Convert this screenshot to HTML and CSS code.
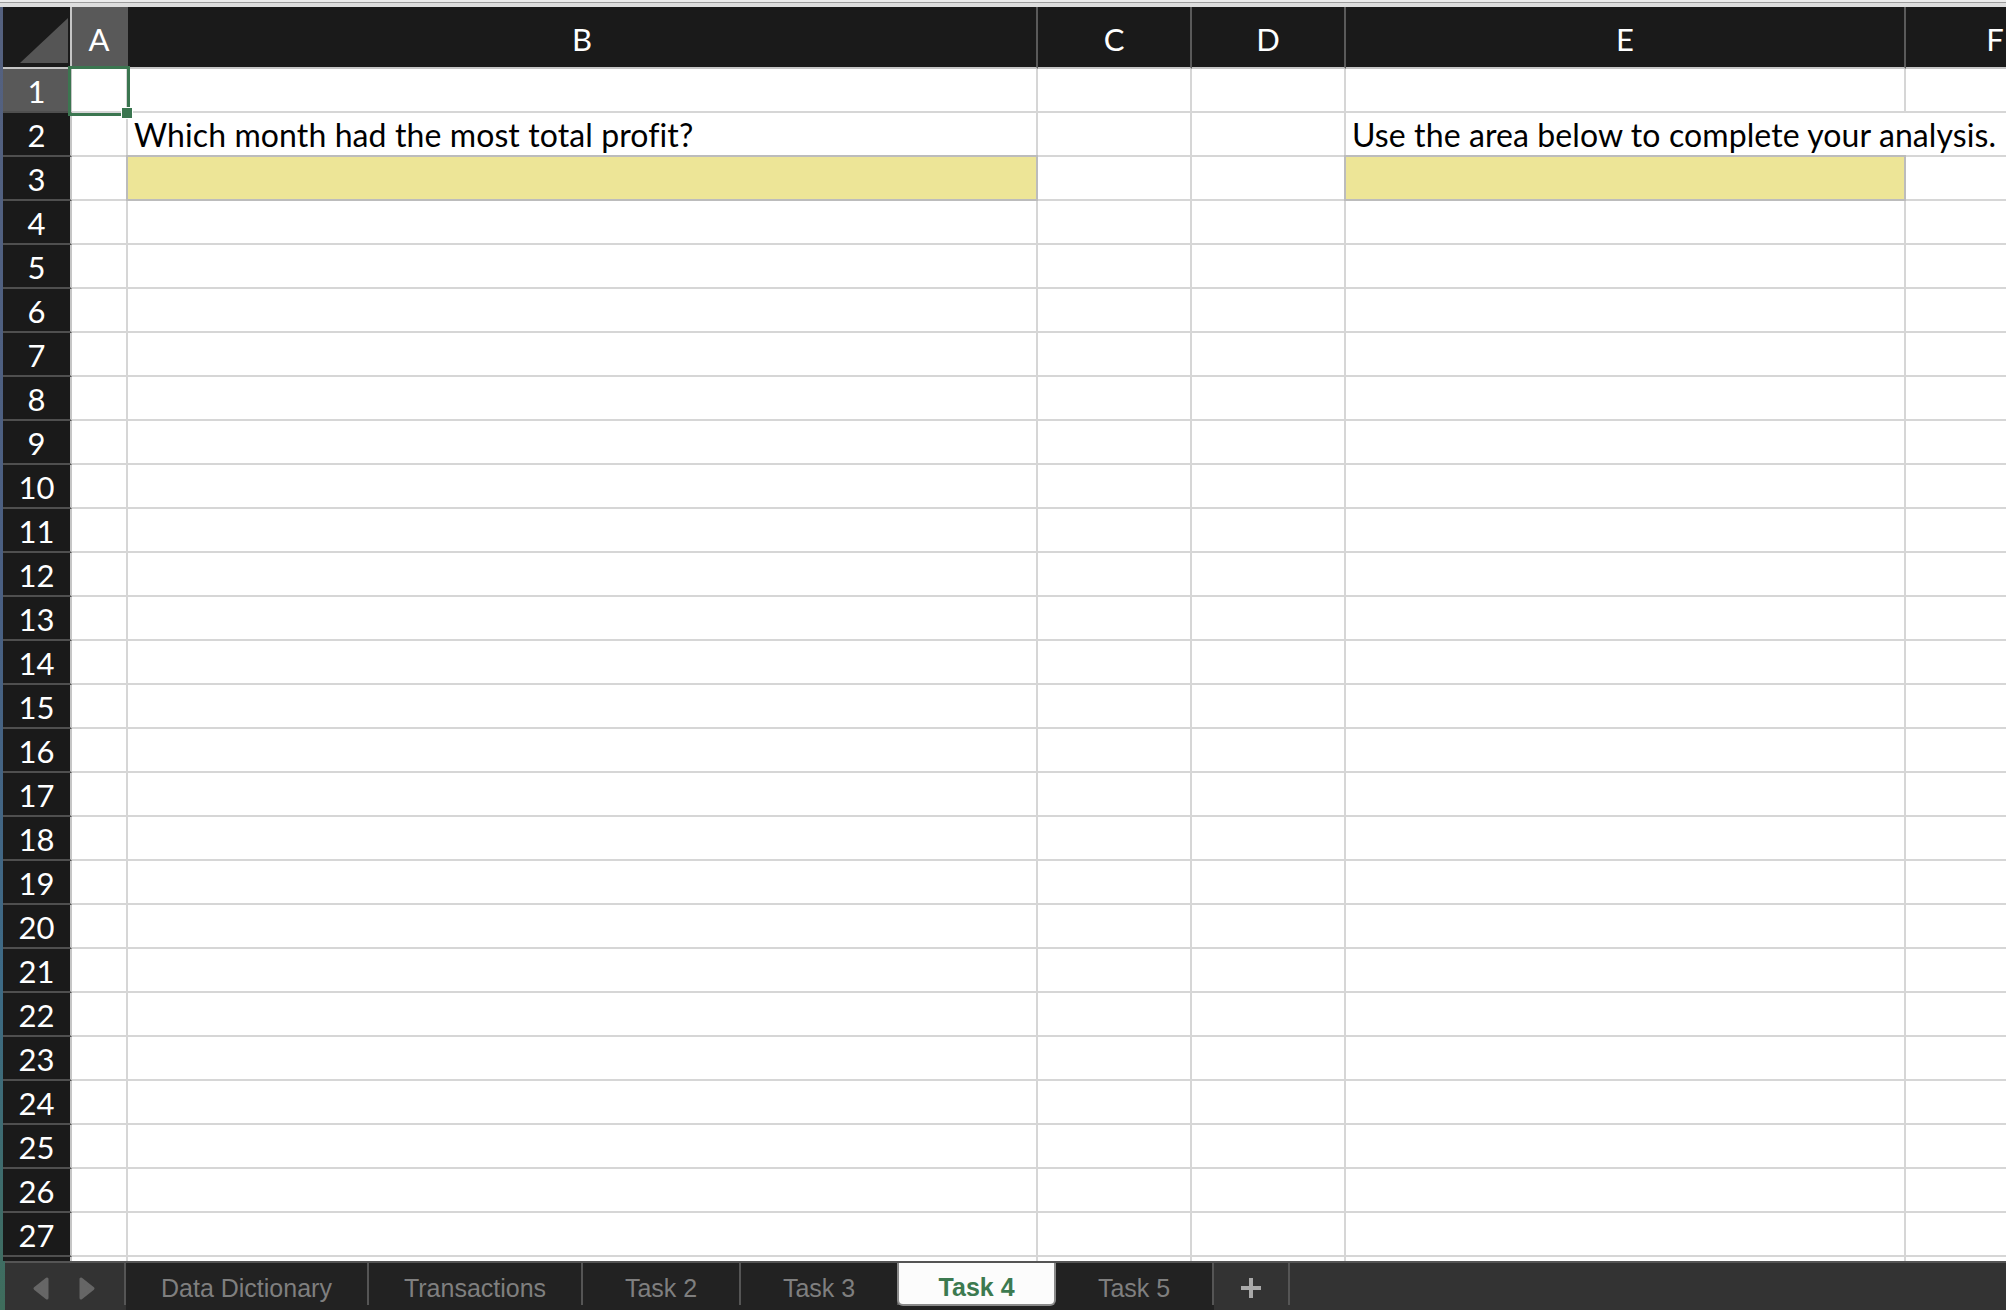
FILE: index.html
```html
<!DOCTYPE html>
<html lang="en">
<head>
<meta charset="utf-8">
<title>Task 4</title>
<link rel="stylesheet" href="styles.css">
</head>
<body>
<div class="window">
  <div class="topbar"></div>
  <div class="sheet">
    <div class="row head">
      <div class="corner"><svg class="corner-tri" width="48" height="45" viewBox="0 0 48 45"><polygon points="0,45 48,0 48,45" fill="#555"/></svg></div>
      <div class="ch sel">A</div>
      <div class="ch">B</div>
      <div class="ch">C</div>
      <div class="ch">D</div>
      <div class="ch">E</div>
      <div class="ch">F</div>
    </div>
    <div class="row"><div class="rh sel">1</div><div class="c active"><div class="selbox"></div><div class="handle"></div></div><div class="c"></div><div class="c"></div><div class="c"></div><div class="c"></div><div class="c"></div></div>
    <div class="row"><div class="rh">2</div><div class="c"></div><div class="c txt">Which month had the most total profit?</div><div class="c"></div><div class="c"></div><div class="c txt spill">Use the area below to complete your analysis.</div><div class="c"></div></div>
    <div class="row"><div class="rh">3</div><div class="c"></div><div class="c fill"></div><div class="c"></div><div class="c"></div><div class="c fill"></div><div class="c"></div></div>
    <div class="row"><div class="rh">4</div><div class="c"></div><div class="c"></div><div class="c"></div><div class="c"></div><div class="c"></div><div class="c"></div></div>
    <div class="row"><div class="rh">5</div><div class="c"></div><div class="c"></div><div class="c"></div><div class="c"></div><div class="c"></div><div class="c"></div></div>
    <div class="row"><div class="rh">6</div><div class="c"></div><div class="c"></div><div class="c"></div><div class="c"></div><div class="c"></div><div class="c"></div></div>
    <div class="row"><div class="rh">7</div><div class="c"></div><div class="c"></div><div class="c"></div><div class="c"></div><div class="c"></div><div class="c"></div></div>
    <div class="row"><div class="rh">8</div><div class="c"></div><div class="c"></div><div class="c"></div><div class="c"></div><div class="c"></div><div class="c"></div></div>
    <div class="row"><div class="rh">9</div><div class="c"></div><div class="c"></div><div class="c"></div><div class="c"></div><div class="c"></div><div class="c"></div></div>
    <div class="row"><div class="rh">10</div><div class="c"></div><div class="c"></div><div class="c"></div><div class="c"></div><div class="c"></div><div class="c"></div></div>
    <div class="row"><div class="rh">11</div><div class="c"></div><div class="c"></div><div class="c"></div><div class="c"></div><div class="c"></div><div class="c"></div></div>
    <div class="row"><div class="rh">12</div><div class="c"></div><div class="c"></div><div class="c"></div><div class="c"></div><div class="c"></div><div class="c"></div></div>
    <div class="row"><div class="rh">13</div><div class="c"></div><div class="c"></div><div class="c"></div><div class="c"></div><div class="c"></div><div class="c"></div></div>
    <div class="row"><div class="rh">14</div><div class="c"></div><div class="c"></div><div class="c"></div><div class="c"></div><div class="c"></div><div class="c"></div></div>
    <div class="row"><div class="rh">15</div><div class="c"></div><div class="c"></div><div class="c"></div><div class="c"></div><div class="c"></div><div class="c"></div></div>
    <div class="row"><div class="rh">16</div><div class="c"></div><div class="c"></div><div class="c"></div><div class="c"></div><div class="c"></div><div class="c"></div></div>
    <div class="row"><div class="rh">17</div><div class="c"></div><div class="c"></div><div class="c"></div><div class="c"></div><div class="c"></div><div class="c"></div></div>
    <div class="row"><div class="rh">18</div><div class="c"></div><div class="c"></div><div class="c"></div><div class="c"></div><div class="c"></div><div class="c"></div></div>
    <div class="row"><div class="rh">19</div><div class="c"></div><div class="c"></div><div class="c"></div><div class="c"></div><div class="c"></div><div class="c"></div></div>
    <div class="row"><div class="rh">20</div><div class="c"></div><div class="c"></div><div class="c"></div><div class="c"></div><div class="c"></div><div class="c"></div></div>
    <div class="row"><div class="rh">21</div><div class="c"></div><div class="c"></div><div class="c"></div><div class="c"></div><div class="c"></div><div class="c"></div></div>
    <div class="row"><div class="rh">22</div><div class="c"></div><div class="c"></div><div class="c"></div><div class="c"></div><div class="c"></div><div class="c"></div></div>
    <div class="row"><div class="rh">23</div><div class="c"></div><div class="c"></div><div class="c"></div><div class="c"></div><div class="c"></div><div class="c"></div></div>
    <div class="row"><div class="rh">24</div><div class="c"></div><div class="c"></div><div class="c"></div><div class="c"></div><div class="c"></div><div class="c"></div></div>
    <div class="row"><div class="rh">25</div><div class="c"></div><div class="c"></div><div class="c"></div><div class="c"></div><div class="c"></div><div class="c"></div></div>
    <div class="row"><div class="rh">26</div><div class="c"></div><div class="c"></div><div class="c"></div><div class="c"></div><div class="c"></div><div class="c"></div></div>
    <div class="row"><div class="rh">27</div><div class="c"></div><div class="c"></div><div class="c"></div><div class="c"></div><div class="c"></div><div class="c"></div></div>
    <div class="row peek"><div class="rh"></div><div class="c"></div><div class="c"></div><div class="c"></div><div class="c"></div><div class="c"></div><div class="c"></div></div>
  </div>
  <div class="tabbar">
    <div class="nav">
      <svg width="119" height="47" viewBox="0 0 119 47">
        <polygon points="42,16 42,35 30,25.5" fill="#666" stroke="#666" stroke-width="3" stroke-linejoin="round"/>
        <polygon points="76,16 76,35 88,25.5" fill="#666" stroke="#666" stroke-width="3" stroke-linejoin="round"/>
      </svg>
    </div>
    <div class="tab">Data Dictionary</div>
    <div class="tab">Transactions</div>
    <div class="tab">Task 2</div>
    <div class="tab">Task 3</div>
    <div class="tab active">Task 4</div>
    <div class="tab">Task 5</div>
    <div class="add">
      <svg width="22" height="22" viewBox="0 0 22 22"><path d="M11 1v20M1 11h20" stroke="#a9a9a9" stroke-width="4"/></svg>
    </div>
    <div class="rest"></div>
  </div>
</div>
</body>
</html>
```

FILE: styles.css
```css
* { box-sizing: border-box; }

html, body {
  margin: 0;
  padding: 0;
  width: 2006px;
  height: 1310px;
  overflow: hidden;
}

body {
  font-family: Lato, "Open Sans", sans-serif;
  background: linear-gradient(180deg, #55617f 0%, #4a5f82 45%, #3d6a85 75%, #3f6d5c 100%);
}

.window {
  display: flex;
  flex-direction: column;
  height: 1310px;
}

.topbar {
  height: 7px;
  flex: none;
  background: linear-gradient(180deg, #ececec 0 2px, #9c9c9c 2px 3px, #dedede 3px 7px);
}

.sheet {
  flex: none;
  margin-left: 3px;
  background: #fff;
  display: flex;
  flex-direction: column;
}

.row {
  display: grid;
  grid-template-columns: 69px 56px 910px 154px 154px 560px 180px;
  height: 44px;
}

.row.head { height: 62px; }
.row.peek { height: 4px; }

.corner {
  background: #1a1a1a;
  border-right: 2px solid #c6c6c6;
  border-bottom: 2px solid #c6c6c6;
  display: flex;
  align-items: flex-end;
  justify-content: flex-end;
  padding: 0 2px 4px 0;
}

.ch {
  background: #1a1a1a;
  color: #fff;
  font-size: 31px;
  display: flex;
  align-items: center;
  justify-content: center;
  padding-top: 3px;
  border-right: 2px solid #5a5a5a;
  border-bottom: 2px solid #c6c6c6;
}

.ch.sel {
  background: #595959;
  border-right-color: #595959;
}

.rh {
  background: #1a1a1a;
  color: #fff;
  font-size: 31px;
  display: flex;
  align-items: center;
  justify-content: center;
  padding-top: 2px;
  border-right: 2px solid #c6c6c6;
  border-bottom: 2px solid #4f4f4f;
}

.rh.sel { background: #595959; }

.peek .rh { border-bottom: none; }

.c {
  border-right: 2px solid #d6d6d6;
  border-bottom: 2px solid #d6d6d6;
}

.peek .c { border-bottom: none; }

.txt {
  font-size: 32px;
  letter-spacing: 0.1px;
  color: #000;
  white-space: nowrap;
  display: flex;
  align-items: center;
  padding-left: 6px;
  padding-top: 1px;
}

.spill {
  overflow: visible;
  border-right-color: transparent;
}

.fill {
  background: #ede597;
  border-right-color: #bcbcbc;
  border-bottom-color: #bcbcbc;
  box-shadow: -2px 0 0 #bcbcbc, 0 -2px 0 #bcbcbc, -2px -2px 0 #bcbcbc;
}

.active { position: relative; }

.selbox {
  position: absolute;
  left: -4px;
  top: -3px;
  width: 62px;
  height: 50px;
  border: 3px solid #3b7650;
}

.handle {
  position: absolute;
  left: 49px;
  top: 38px;
  width: 12px;
  height: 12px;
  background: #3b7650;
  border: 1px solid #fff;
}

/* sheet tabs */
.tabbar {
  flex: none;
  height: 49px;
  margin-left: 5px;
  border-top: 2px solid #555;
  background: #222;
  display: flex;
  font-family: "Liberation Sans", Arial, sans-serif;
  font-size: 25px;
}

.nav {
  flex: none;
  width: 121px;
  background: #333;
  position: relative;
}

.nav::after,
.tab::after,
.add::after {
  content: "";
  position: absolute;
  right: 0;
  top: 0;
  bottom: 5px;
  width: 2px;
  background: #555;
}

.tab {
  flex: none;
  position: relative;
  min-width: 158px;
  padding: 3px 37px 0 35px;
  color: #7f7f7f;
  display: flex;
  align-items: center;
  justify-content: center;
  white-space: nowrap;
}

.tab.active {
  background: #fcfcfc;
  color: #3c7a50;
  font-weight: bold;
  height: 43px;
  margin-left: -2px;
  min-width: 159px;
  z-index: 1;
  border: 2px solid #8a8a8a;
  border-top: none;
  border-radius: 0 0 6px 6px;
  padding: 7px 0 0;
}

.tab.active::after { display: none; }

.add {
  flex: none;
  position: relative;
  width: 76px;
  background: #333;
  display: flex;
  align-items: center;
  justify-content: center;
  padding: 3px 2px 0 0;
}

.rest {
  flex: 1;
  background: #333;
}
```
